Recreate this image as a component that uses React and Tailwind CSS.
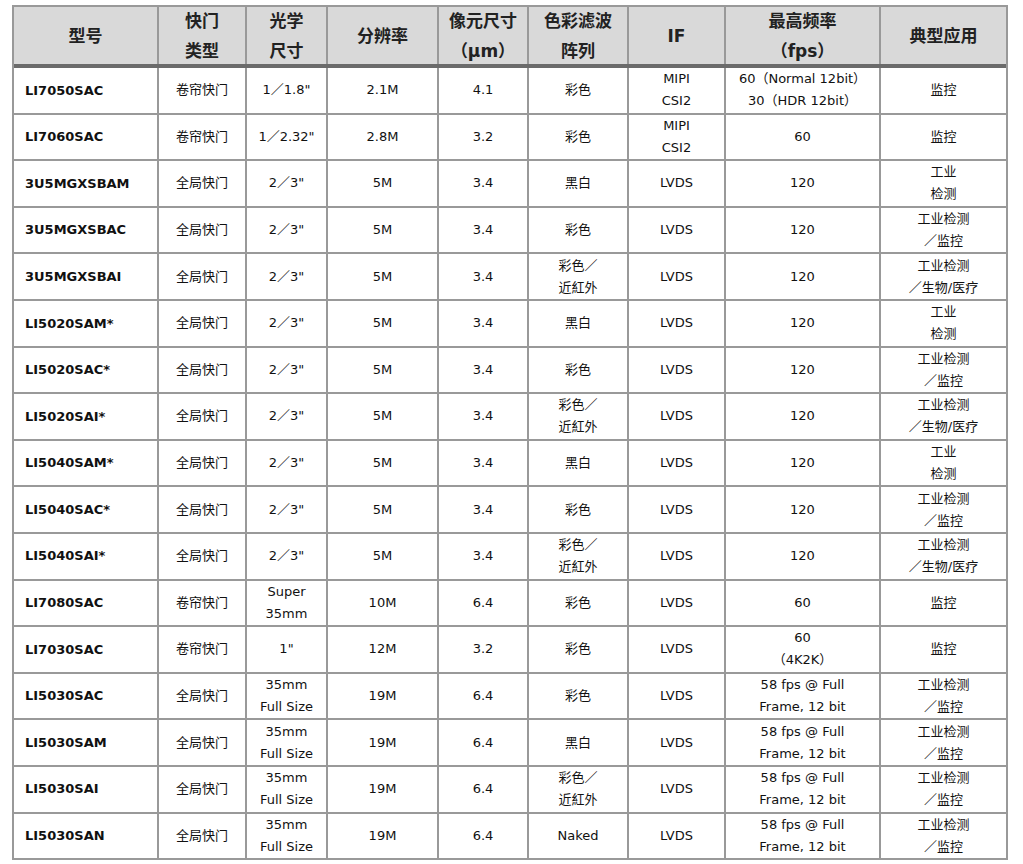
import React from 'react';

const headers = [
  ['型号'],
  ['快门', '类型'],
  ['光学', '尺寸'],
  ['分辨率'],
  ['像元尺寸', '（μm）'],
  ['色彩滤波', '阵列'],
  ['IF'],
  ['最高频率', '（fps）'],
  ['典型应用'],
];

const G = '全局快门';
const R = '卷帘快门';
const NIR = ['彩色／', '近紅外'];
const INS = ['工业', '检测'];
const INS_MON = ['工业检测', '／监控'];
const INS_BIO = ['工业检测', '／生物/医疗'];
const FULL = ['58 fps @ Full', 'Frame, 12 bit'];
const FF = ['35mm', 'Full Size'];

const rows = [
  ['LI7050SAC', R, '1／1.8"', '2.1M', '4.1', '彩色', ['MIPI', 'CSI2'], ['60（Normal 12bit）', '30（HDR 12bit）'], '监控'],
  ['LI7060SAC', R, '1／2.32"', '2.8M', '3.2', '彩色', ['MIPI', 'CSI2'], '60', '监控'],
  ['3U5MGXSBAM', G, '2／3"', '5M', '3.4', '黑白', 'LVDS', '120', INS],
  ['3U5MGXSBAC', G, '2／3"', '5M', '3.4', '彩色', 'LVDS', '120', INS_MON],
  ['3U5MGXSBAI', G, '2／3"', '5M', '3.4', NIR, 'LVDS', '120', INS_BIO],
  ['LI5020SAM*', G, '2／3"', '5M', '3.4', '黑白', 'LVDS', '120', INS],
  ['LI5020SAC*', G, '2／3"', '5M', '3.4', '彩色', 'LVDS', '120', INS_MON],
  ['LI5020SAI*', G, '2／3"', '5M', '3.4', NIR, 'LVDS', '120', INS_BIO],
  ['LI5040SAM*', G, '2／3"', '5M', '3.4', '黑白', 'LVDS', '120', INS],
  ['LI5040SAC*', G, '2／3"', '5M', '3.4', '彩色', 'LVDS', '120', INS_MON],
  ['LI5040SAI*', G, '2／3"', '5M', '3.4', NIR, 'LVDS', '120', INS_BIO],
  ['LI7080SAC', R, ['Super', '35mm'], '10M', '6.4', '彩色', 'LVDS', '60', '监控'],
  ['LI7030SAC', R, '1"', '12M', '3.2', '彩色', 'LVDS', ['60', '（4K2K）'], '监控'],
  ['LI5030SAC', G, FF, '19M', '6.4', '彩色', 'LVDS', FULL, INS_MON],
  ['LI5030SAM', G, FF, '19M', '6.4', '黑白', 'LVDS', FULL, INS_MON],
  ['LI5030SAI', G, FF, '19M', '6.4', NIR, 'LVDS', FULL, INS_MON],
  ['LI5030SAN', G, FF, '19M', '6.4', 'Naked', 'LVDS', FULL, INS_MON],
];

function Lines({ value }) {
  const list = Array.isArray(value) ? value : [value];
  return list.map((t, i) => <div key={i} className="whitespace-nowrap">{t}</div>);
}

export default function App() {
  return (
    <div className="min-h-screen bg-white text-[#111] font-['DejaVu_Sans','Noto_Sans_CJK_SC',sans-serif]">
      <div className="ml-[12px] pt-[5px]">
        <div className="w-[996px] border-2 border-[#999]">

          {/* header */}
          <div className="grid grid-cols-[143px_86px_79px_109px_88px_98px_95px_153px_125px] gap-x-[2px] bg-[#999]">
            {headers.map((h, i) => (
              <div key={i} className="h-[57px] bg-[#d9d9d9] flex flex-col items-center justify-center pt-[1px] text-[17px] font-bold leading-[30px] text-[#222]">
                <Lines value={h} />
              </div>
            ))}
          </div>
          <div className="h-[4px] bg-[#6b6b6b]"></div>

          {/* body */}
          <div className="grid grid-cols-[143px_86px_79px_109px_88px_98px_95px_153px_125px] auto-rows-[44.6px] gap-[2px] bg-[#999]">
            {rows.map((r, ri) =>
              r.map((c, ci) =>
                ci === 0 ? (
                  <div key={ri + '-' + ci} className="bg-white flex items-center pl-[11px] text-[13px] font-bold">
                    {c}
                  </div>
                ) : (
                  <div key={ri + '-' + ci} className="bg-white flex flex-col items-center justify-center text-center text-[13px] leading-[22px]">
                    <Lines value={c} />
                  </div>
                )
              )
            )}
          </div>

        </div>
      </div>
    </div>
  );
}
